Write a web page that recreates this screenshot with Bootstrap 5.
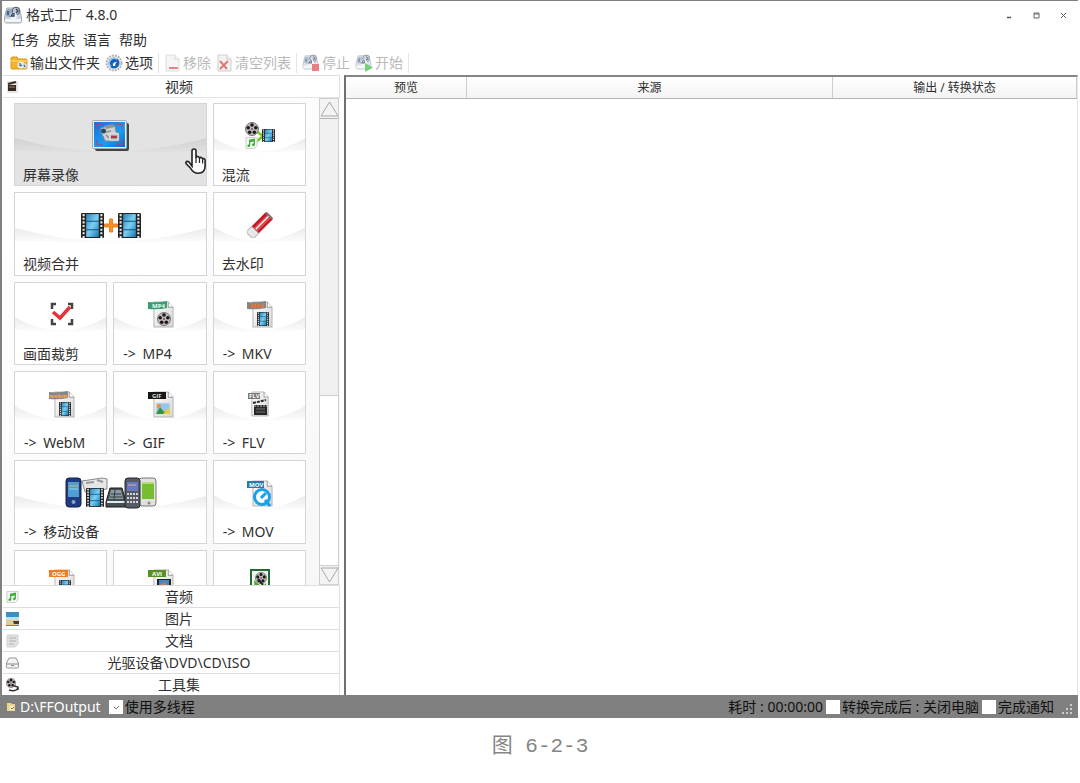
<!DOCTYPE html>
<html lang="zh-CN">
<head>
<meta charset="utf-8">
<meta name="viewport" content="width=device-width, initial-scale=1">
<title>格式工厂 4.8.0</title>
<link href="https://cdn.jsdelivr.net/npm/bootstrap@5.3.0/dist/css/bootstrap.min.css" rel="stylesheet">
<style>
body{font-family:"Noto Sans","Noto Sans CJK SC",sans-serif;font-size:14px;line-height:20px;color:#303030;background:#fff}
button{font:inherit;color:inherit;background:none;border:0;padding:0}
svg{display:block;flex-shrink:0}
.app{border-top:1px solid #808080;border-left:2px solid #808080;margin-right:2px;min-height:0}
.workspace{min-height:0}
.titlebar,.menubar,.toolstrip,.cat,.statusbar,.figcap{flex-shrink:0}
.titlebar{height:28px;padding:0 9px 0 2px}
.winctl{gap:16px}
.winctl button{width:11px;height:12px}
.menubar{height:22px;padding-left:9px;gap:8px}
.toolstrip{height:24px;padding-left:8px;gap:5px}
.tool{display:flex;align-items:center;gap:2px;white-space:nowrap}
.tool:disabled{color:#b9b9b9}
.tool:disabled svg{opacity:.65}
.divider{width:1px;height:20px;background:#e6e6e6}
.sidebar{width:342px;padding:0 4px 0 1px}
.cat{height:22px;width:100%;display:flex;align-items:center;padding:0 0 0 3px;border-top:1px solid #dedede;border-right:1px solid #dedede;background:#fff}
.cat span{flex:1;text-align:center}
.pane{min-height:0;border-top:1px solid #e3e3e3;background:linear-gradient(135deg,#fff,#f7f7f7)}
.tiles{width:292px;height:530px;margin:5px 0 0 11px;display:grid;grid-template-columns:repeat(3,1fr);grid-template-rows:repeat(6,1fr);gap:6px}
.tile{position:relative;display:flex;flex-direction:column;align-items:center;border:1px solid #d5d5d5;background:#fff url("data:image/svg+xml,%3Csvg xmlns='http://www.w3.org/2000/svg' viewBox='0 0 100 83' preserveAspectRatio='none'%3E%3ClinearGradient id='g' x1='0' y1='0' x2='0' y2='1'%3E%3Cstop stop-color='%23000' stop-opacity='.08'/%3E%3Cstop offset='1' stop-color='%23000' stop-opacity='.01'/%3E%3C/linearGradient%3E%3Cpath d='M0 35Q50 62 100 35V48Q50 52 0 48Z' fill='url(%23g)'/%3E%3C/svg%3E") 0 0/100% 100%}
.tile.wide{grid-column:span 2}
.tile.hot{background-color:#e3e3e3}
.tile .art{height:61px;padding:2px 0 0 2px;display:flex;align-items:center}
.tile .cap{width:100%;text-align:left;padding-left:8px}
.arrow{margin:0 3px 0 1px}
.hand{position:absolute;right:0;top:43px}
.scroller{width:20px;margin-right:1px;border:1px solid #cfcfcf;background:#fff}
.scroller button{height:19px;background:#f3f3f3}
.thumb{height:278px;background:#f0f0f0;border-top:1px solid #b5b5b5;border-bottom:1px solid #cfcfcf}
.down{border-top:1px solid #cfcfcf}
.tasks{border-left:2px solid #6f6f6f;border-top:2px solid #858585;border-right:1px solid #e5e5e5}
.tasks table{width:100%;table-layout:fixed;font-size:12px}
.tasks th{height:21px;font-weight:400;text-align:center;padding:1px 0 0;border-bottom:1px solid #b5b5b5;border-right:1px solid #cdcdcd;background:linear-gradient(#fff,#f3f3f3)}
.c1{width:16.5%}.c2{width:50.1%}
.statusbar{height:23px;margin-right:2px;background:#808080;color:#111;padding:0 4px 0 6px;white-space:nowrap}
.statusbar input{appearance:none;width:14px;height:14px;margin:0 2px 0 3px;background:#fff;flex-shrink:0}
.statusbar input:checked{background:#fff url("data:image/svg+xml,%3Csvg xmlns='http://www.w3.org/2000/svg' viewBox='0 0 14 14'%3E%3Cpath d='M5 7l2 2 3-3' fill='none' stroke='%23777'/%3E%3C/svg%3E")}
.statusbar a{color:#fff;text-decoration:none}
.figcap{height:65px;padding-top:13px;margin:0;text-align:center;color:#858585;font-family:"Liberation Mono","Noto Sans CJK SC",monospace;font-size:21px;line-height:32px}
.icontext{font-family:"Open Sans",sans-serif;font-weight:700;font-size:6px}
</style>
</head>
<body>
<svg width="0" height="0" class="position-absolute" aria-hidden="true">
  <defs>
    <linearGradient id="blue" x1="0" y1="0" x2="1" y2="1"><stop stop-color="#2d86b8"/><stop offset=".5" stop-color="#79cff5"/><stop offset="1" stop-color="#1679b0"/></linearGradient>
    <linearGradient id="paper" x1="0" y1="0" x2="1" y2="1"><stop stop-color="#fff"/><stop offset="1" stop-color="#d5d5d5"/></linearGradient>
    <linearGradient id="sky" x1="0" y1="0" x2="1" y2="1"><stop stop-color="#1670d8"/><stop offset=".6" stop-color="#199ef5"/><stop offset="1" stop-color="#0b68c8"/></linearGradient>
    <symbol id="film" viewBox="0 0 22 24" preserveAspectRatio="none"><rect width="22" height="24" rx="1" fill="#242424"/><path d="M2.500 1v23M19.500 1v23" stroke="#e6e6e6" stroke-width="2" stroke-dasharray="2 1.500"/><rect x="5" y="1" width="12" height="22" fill="url(#blue)"/><path d="M5 8h12M5 16h12" stroke="#125475"/></symbol>
    <symbol id="reel" viewBox="0 0 14 14"><circle cx="7" cy="7" r="6.500" fill="#bdbdbd" stroke="#777"/><g fill="#241515"><circle cx="7" cy="3" r="1.800"/><circle cx="3.200" cy="5.700" r="1.800"/><circle cx="10.800" cy="5.700" r="1.800"/><circle cx="4.700" cy="10.200" r="1.800"/><circle cx="9.300" cy="10.200" r="1.800"/><circle cx="7" cy="7" r=".8"/></g></symbol>
    <symbol id="page" viewBox="0 0 22 26" preserveAspectRatio="none"><path d="M1 1h15l5 5v19H1z" fill="url(#paper)" stroke="#b5b5b5"/><path d="M16 1v5h5" fill="#fff" stroke="#999"/></symbol>
    <symbol id="note" viewBox="0 0 14 14"><path d="M1 1h12v9l-3 3H1z" fill="#f4f6f2" stroke="#c9cdc6"/><path d="M5 10V4l5-1v6M5 5.500l5-1" fill="none" stroke="#35ab35" stroke-width="1.300"/><circle cx="4" cy="10" r="1.400" fill="#35ab35"/><circle cx="9" cy="9" r="1.400" fill="#35ab35"/></symbol>
    <symbol id="logo" viewBox="0 0 18 18"><path d="M3 2h12l2.500 9v4q0 2-2 2H2.500q-2 0-2-2v-4z" fill="#ccd3dc" stroke="#a5afbb"/><path d="M1 13h16v3H1z" fill="#f2f4f6"/><circle cx="5.500" cy="7" r="4" fill="#8fa8c5"/><circle cx="12" cy="5" r="3.800" fill="#b9c6d5" stroke="#556"/><circle cx="9.500" cy="10" r="3.500" fill="#eef2f7"/><path d="M9 7l-2 3h3V7M12 3l2 2-2 2M4 5v4" fill="none" stroke="#2b4058" stroke-width="1.300"/></symbol>
  </defs>
</svg>

<div class="vh-100 d-flex flex-column">
<div class="app d-flex flex-column flex-fill">
  <header class="titlebar d-flex align-items-center">
    <svg width="18" height="18"><use href="#logo"/></svg>
    <span class="ms-1">格式工厂 4.8.0</span>
    <div class="winctl d-flex ms-auto">
      <button aria-label="最小化"><svg width="11" height="12"><path d="M3 8.500h4" stroke="#555" stroke-width="1.500"/></svg></button>
      <button aria-label="最大化"><svg width="11" height="12"><path d="M3 4h5v5H3zM3 5h5" fill="none" stroke="#666"/></svg></button>
      <button aria-label="关闭"><svg width="11" height="12"><path d="M3 4l5 5M8 4l-5 5" stroke="#666"/></svg></button>
    </div>
  </header>
  <nav class="menubar d-flex align-items-center"><button>任务</button><button>皮肤</button><button>语言</button><button>帮助</button></nav>
  <div class="toolstrip d-flex align-items-center">
    <button class="tool"><svg width="18" height="16"><path d="M1 3l1-1h5l1 2h8q1 0 1 1v8q0 1-1 1H2q-1 0-1-1z" fill="#f4b426" stroke="#d59614"/><path d="M1 6h16" stroke="#ffe18a"/><circle cx="11" cy="10" r="3.500" fill="#e4ebf2"/><circle cx="15" cy="11" r="2.500" fill="#ccd8e5"/><path d="M10 8v3l2-1M14 10l1 2" stroke="#345" fill="none"/></svg>输出文件夹</button>
    <button class="tool"><svg width="18" height="18"><circle cx="9" cy="9" r="7.500" fill="#f0f0f0" stroke="#b5b5b5" stroke-width="2" stroke-dasharray="2 1"/><circle cx="9" cy="9" r="5.500" fill="#1662b5"/><path d="M6 12.500a4.500 4.500 0 0 1 6-7" fill="none" stroke="#a8d4f7" stroke-width="1.300"/><path d="M8 12q-1-4 4-4-2 1-2 4z" fill="#fff"/></svg>选项</button>
    <i class="divider"></i>
    <button class="tool" disabled><svg width="17" height="18"><path d="M2 1h9l4 4v12H2z" fill="#f0f0f0" stroke="#ccc"/><path d="M11 1v4h4" fill="#fff" stroke="#bbb"/><path d="M5 14h9" stroke="#df4040" stroke-width="2"/></svg>移除</button>
    <button class="tool" disabled><svg width="17" height="18"><path d="M2 1h9l4 4v12H2z" fill="#eee" stroke="#b5b5b5"/><path d="M11 1v4h4" fill="#fff" stroke="#aaa"/><path d="M4 7l7 8M12 7l-8 8" stroke="#cf3030" stroke-width="2"/></svg>清空列表</button>
    <i class="divider"></i>
    <button class="tool" disabled><svg width="18" height="18"><use href="#logo" width="17" height="16"/><path d="M10 10h7v7h-7z" fill="#e03b3b"/></svg>停止</button>
    <button class="tool" disabled><svg width="18" height="18"><use href="#logo" width="17" height="16"/><path d="M10 9l8 4.500-8 4.500z" fill="#2fb52f"/></svg>开始</button>
    <i class="divider"></i>
  </div>

  <main class="workspace d-flex flex-fill">
    <aside class="sidebar d-flex flex-column flex-shrink-0">
      <button class="cat"><svg width="13" height="14"><rect x="1" y="1" width="11" height="12" rx="1" fill="#e9e4df"/><path d="M2 5h8v6H2z" fill="#352820"/><path d="M2 4l8-2" stroke="#352820" stroke-width="2"/><path d="M3 7h6" stroke="#9a8878"/></svg><span>视频</span></button>
      <div class="pane d-flex flex-fill overflow-hidden">
        <div class="tiles flex-shrink-0">
          <button class="tile wide hot"><span class="art"><svg width="38" height="32"><rect x="3" y="3" width="34" height="28" rx="2" fill="#454545"/><rect x=".5" y=".5" width="34" height="28" rx="1" fill="#e9eef3" stroke="#aaa"/><rect x="2" y="2" width="31" height="25" fill="url(#sky)"/><path d="M5 9V4h6M24 4h6v5M5 20v5h6M24 25h6v-5" fill="none" stroke="#c23a5c"/><path d="M9 8l9-3 5 1 1 6 3 1v8H13l-2-5-2-3z" fill="#cfd2d2" stroke="#7d8990"/><path d="M12 6l9-2 2 3-9 2z" fill="#8d949a"/><circle cx="11.500" cy="11" r="2.500" fill="#29495f"/><path d="M14 12l5-1M14 15l3 3" stroke="#8b9296" stroke-width="1.500"/><rect x="18" y="14" width="8" height="6" fill="#9aa5aa" stroke="#eee"/><path d="M19 17h6" stroke="#b63445" stroke-width="2"/></svg></span><span class="cap">屏幕录像</span>
            <svg class="hand" width="22" height="28"><path d="M8 19V4q0-2 2-2t2 2v7q0-2 2-1.500 1.500.3 1.500 2 .3-1.500 1.800-1 1.300.4 1.300 2 .3-1.200 1.500-.7 1 .4 1 2v5c0 4-2 7.500-7 7.500-4 0-6-2.500-7.500-5L2 16.500q-.6-1.500.5-2T5 15z" fill="#fff" stroke="#222" stroke-width="1.600"/><path d="M12 10v6M15.500 11v5M18.600 12.500v4" stroke="#222" stroke-width="1.200"/></svg></button>
          <button class="tile"><span class="art"><svg width="30" height="28"><path d="M11 9l7 5-7 6M17 14h4" fill="none" stroke="#78c620" stroke-width="2.500"/><use href="#reel" width="14" height="14"/><use href="#note" y="14" width="13" height="14"/><use href="#film" x="17" y="7" width="13" height="13"/></svg></span><span class="cap">混流</span></button>
          <button class="tile wide"><span class="art"><svg width="62" height="26"><use href="#film" x="1" y="1" width="23" height="25"/><path d="M29.500 7h3v5h5v3h-5v5h-3v-5h-5v-3h5z" fill="#f59225" stroke="#ee7f22"/><use href="#film" x="38" y="1" width="23" height="25"/></svg></span><span class="cap">视频合并</span></button>
          <button class="tile"><span class="art"><svg width="26" height="26"><g transform="rotate(-45 13 13)"><rect x="-1" y="8" width="28" height="10" rx="2" fill="#c51822"/><path d="M6 11.500h20M6 15h20" stroke="#e84a50" stroke-width="1.500"/><path d="M7 13h19" stroke="#fff" stroke-width="1.500"/><path d="M0 8h6v10H0q-2 0-2-5t2-5z" fill="#e8e8e8" stroke="#bbb"/><path d="M25 9h2v8h-2z" fill="#777"/></g></svg></span><span class="cap">去水印</span></button>
          <button class="tile"><span class="art"><svg width="24" height="24"><path d="M6 2H2v5M18 2h4v5M2 17v5h4M18 22h4v-5" fill="none" stroke="#444" stroke-width="2.500"/><path d="M3 10l7 6L20 5" fill="none" stroke="#e6323a" stroke-width="3.500"/></svg></span><span class="cap">画面裁剪</span></button>
          <button class="tile"><span class="art"><svg width="26" height="28"><use href="#page" x="5" y="1" width="21" height="27"/><path d="M0 2q10 1 19-1v7q-9 2-19 1z" fill="#3a9d73"/><text x="4" y="8" fill="#e5fff3" class="icontext">MP4</text><use href="#reel" x="9" y="12" width="14" height="14"/></svg></span><span class="cap"><span class="arrow">-&gt;</span> MP4</span></button>
          <button class="tile"><span class="art"><svg width="26" height="28"><use href="#page" x="5" y="1" width="21" height="27"/><path d="M0 2q10 1 19-1v7q-9 2-19 1z" fill="#868686"/><text x="3" y="8" fill="#ff6b18" class="icontext">MKV</text><use href="#film" x="10" y="12" width="12" height="14"/></svg></span><span class="cap"><span class="arrow">-&gt;</span> MKV</span></button>
          <button class="tile"><span class="art"><svg width="26" height="28"><use href="#page" x="5" y="1" width="21" height="27"/><path d="M0 2q10 1 19-1v7q-9 2-19 1z" fill="#858585"/><text x="0" y="8" fill="#ffac28" class="icontext">webm</text><use href="#film" x="10" y="12" width="12" height="14"/></svg></span><span class="cap"><span class="arrow">-&gt;</span> WebM</span></button>
          <button class="tile"><span class="art"><svg width="26" height="28"><use href="#page" x="5" y="1" width="21" height="27"/><path d="M0 2h18v7H0z" fill="#171717"/><text x="4" y="8" fill="#ddd" class="icontext">GIF</text><rect x="8" y="13" width="14" height="11" fill="#91c8ef" stroke="#ddd"/><path d="M8 24l4-7 4 5 3-2 3 4z" fill="#34933b"/><circle cx="11" cy="16" r="2" fill="#f48d31"/><path d="M15 24l5-6 2 2v4z" fill="#eacb42"/></svg></span><span class="cap"><span class="arrow">-&gt;</span> GIF</span></button>
          <button class="tile"><span class="art"><svg width="26" height="28"><use href="#page" x="4" y="1" width="18" height="26"/><path d="M1 3h12v6H1z" fill="#777"/><text x="2" y="8" fill="#fff" class="icontext">FLV</text><path d="M7 15h13v10H7z" fill="#292929"/><path d="M6 13l13-3" stroke="#292929" stroke-width="2" stroke-dasharray="3 1"/><path d="M7 16h13" stroke="#bbb" stroke-dasharray="2 1"/><path d="M9 19h9M9 22h9" stroke="#777"/></svg></span><span class="cap"><span class="arrow">-&gt;</span> FLV</span></button>
          <button class="tile wide"><span class="art"><svg width="94" height="34"><path d="M18 5l20-3 5 1v10l-22 3z" fill="#e6e6e6" stroke="#888"/><path d="M22 7l8-1M33 4l6 2" stroke="#999" stroke-width="2"/><rect x="2" y="2" width="15" height="29" rx="3" fill="#203a7e" stroke="#14224d"/><rect x="4" y="6" width="11" height="15" fill="#4e9fd0"/><path d="M5 10h9" stroke="#d7bb6b"/><path d="M5 13h9" stroke="#90d8ef"/><circle cx="9.500" cy="26" r="2" fill="#8ba3ce"/><use href="#film" x="22" y="12" width="18" height="19"/><path d="M46 12h12l4 14v5H42v-5z" fill="#474d50" stroke="#1d1d1d"/><path d="M47 14h10l2 9H45z" fill="#8a9ba4"/><path d="M47 18h10M46 21h12M51 14l-1 9" stroke="#303a42"/><path d="M43 26h18" stroke="#d9ebee" stroke-width="2"/><rect x="75" y="2" width="17" height="28" rx="3" fill="#e0e2de" stroke="#777"/><rect x="78" y="6" width="12" height="17" fill="#76bd30"/><path d="M78 7h12" stroke="#b3dd76" stroke-width="2"/><circle cx="85" cy="27" r="1.500" fill="#888"/><rect x="61" y="2" width="15" height="30" rx="3" fill="#555b66" stroke="#292929"/><rect x="63" y="6" width="11" height="9" fill="#657bbd"/><path d="M64 9h8" stroke="#d5b3a8"/><path d="M63 18h11M63 22h11M63 26h11" stroke="#d4d4d4" stroke-width="2" stroke-dasharray="2 1"/></svg></span><span class="cap"><span class="arrow">-&gt;</span> 移动设备</span></button>
          <button class="tile"><span class="art"><svg width="26" height="28"><use href="#page" x="5" y="1" width="21" height="27"/><path d="M0 2h17v7H0z" fill="#267ba8"/><text x="2" y="8" fill="#fff" class="icontext">MOV</text><circle cx="15" cy="18" r="7.500" fill="#fff" stroke="#17a1e8" stroke-width="3"/><path d="M14 19l5-5M18 21l5 6" stroke="#17a1e8" stroke-width="3"/></svg></span><span class="cap"><span class="arrow">-&gt;</span> MOV</span></button>
          <button class="tile" aria-label="OGG"><span class="art"><svg width="26" height="28"><use href="#page" x="5" y="1" width="21" height="27"/><path d="M0 2h19v7H0z" fill="#f17b20"/><text x="3" y="8" fill="#fff" class="icontext">OGG</text><use href="#film" x="10" y="12" width="12" height="14"/></svg></span></button>
          <button class="tile" aria-label="AVI"><span class="art"><svg width="26" height="28"><use href="#page" x="5" y="1" width="21" height="27"/><path d="M0 2h18v7H0z" fill="#568f24"/><text x="4" y="8" fill="#fff" class="icontext">AVI</text><rect x="9" y="11" width="14" height="16" fill="#242424"/><rect x="11" y="12" width="10" height="10" fill="#3e8ace"/><path d="M11 18l5-4 5 4v4H11z" fill="#db713a"/></svg></span></button>
          <button class="tile" aria-label="更多格式"><span class="art"><svg width="26" height="28"><path d="M4 2h18v26H4z" fill="#f1f5f1" stroke="#246b32" stroke-width="2"/><use href="#reel" x="8" y="4" width="12" height="12"/><path d="M7 12l8 7 4-4v10H8z" fill="#55a437"/><path d="M11 11l5 6" stroke="#222" stroke-width="2"/></svg></span></button>
        </div>
        <div class="scroller d-flex flex-column ms-auto">
          <button aria-label="向上滚动"><svg width="18" height="19"><path d="M1 17L9.500 3 18 17z" fill="none" stroke="#a9a9a9"/></svg></button>
          <div class="thumb"></div>
          <button class="down mt-auto" aria-label="向下滚动"><svg width="18" height="18"><path d="M1 2l8.500 14L18 2z" fill="none" stroke="#a9a9a9"/></svg></button>
        </div>
      </div>
      <button class="cat"><svg width="13" height="14"><use href="#note" width="13" height="14"/></svg><span>音频</span></button>
      <button class="cat"><svg width="13" height="14"><rect width="13" height="14" fill="#3d8fc2"/><path d="M0 5h13v4H0z" fill="#bce2ee"/><path d="M0 8h13v5H0z" fill="#e5c98f"/><path d="M7 9h6v3H8z" fill="#443a2b"/></svg><span>图片</span></button>
      <button class="cat"><svg width="13" height="14"><path d="M1 1h11v9l-3 3H1z" fill="#e1e1e1" stroke="#d1d1d1"/><path d="M3 4h7M3 7h7M3 10h5" stroke="#b2b2b2"/></svg><span>文档</span></button>
      <button class="cat"><svg width="13" height="14"><path d="M3 2h7l2.500 5v4q0 1-1 1h-10q-1 0-1-1V7z" fill="#f3f3f3" stroke="#999"/><path d="M1 8h11" stroke="#888"/><path d="M5 9h3v1H5z" fill="#888"/></svg><span>光驱设备\DVD\CD\ISO</span></button>
      <button class="cat"><svg width="13" height="14"><use href="#reel" width="10" height="10"/><path d="M3 12q7 2 9-2M8 8l4 1v3" fill="none" stroke="#333" stroke-width="1.500"/></svg><span>工具集</span></button>
    </aside>
    <section class="tasks flex-fill">
      <table><thead><tr><th class="c1" scope="col">预览</th><th class="c2" scope="col">来源</th><th scope="col">输出 / 转换状态</th></tr></thead><tbody></tbody></table>
    </section>
  </main>
</div>
<footer class="statusbar d-flex align-items-center">
  <a href="#" class="d-flex align-items-center gap-1"><svg width="10" height="10"><path d="M1 1h4l1 1h3v7H1z" fill="#eed48c"/><path d="M4 4h4v4H4z" fill="#fbf3d3"/><path d="M5 6l1 1 2-2" fill="none" stroke="#756c4b"/></svg>D:\FFOutput</a>
  <input type="checkbox" id="threads" class="ms-2" checked><label for="threads">使用多线程</label>
  <span class="ms-auto">耗时 : 00:00:00</span>
  <input type="checkbox" id="after"><label for="after">转换完成后 : 关闭电脑</label>
  <input type="checkbox" id="notify"><label for="notify">完成通知</label>
  <svg width="12" height="12" class="ms-2 mt-1"><path d="M8 1h2v2H8zM8 5h2v2H8zM4 5h2v2H4zM8 9h2v2H8zM4 9h2v2H4zM0 9h2v2H0z" fill="#ccc"/></svg>
</footer>
<p class="figcap">图 6-2-3</p>
</div>
<script src="https://cdn.jsdelivr.net/npm/bootstrap@5.3.0/dist/js/bootstrap.bundle.min.js"></script>
</body>
</html>
